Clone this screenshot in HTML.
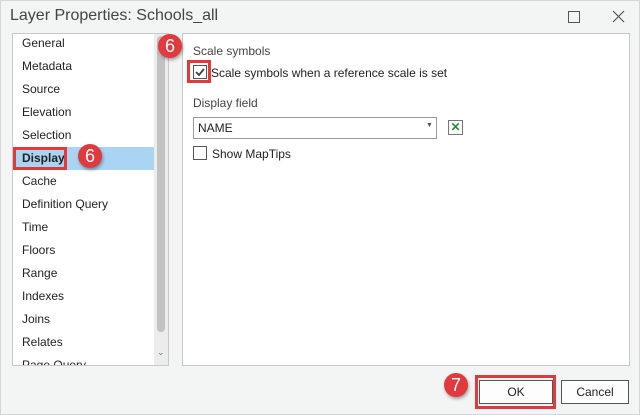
<!DOCTYPE html>
<html><head><style>
*{margin:0;padding:0;box-sizing:border-box}
body{width:640px;height:415px;background:#f3f4f4;font-family:"Liberation Sans",sans-serif;font-size:12px;color:#222;position:relative;overflow:hidden;border:1px solid #d4d6d6}
.a{position:absolute}
.title{left:9px;top:6px;font-size:16px;color:#444}
.list{left:11px;top:32px;width:157px;height:333px;background:#fff;border:1px solid #c8c8c8;overflow:hidden}
.item{position:absolute;left:9px;font-size:12px;color:#222}
.sb{left:141px;top:0;width:14px;height:331px;background:#ececec}
.thumb{left:3px;top:2px;width:8px;height:296px;background:#c2c2c2;border-radius:4px;position:absolute}
.panel{left:181px;top:32px;width:448px;height:333px;background:#fff;border:1px solid #c8c8c8}
.badge{width:24px;height:24px;border-radius:50%;background:#e0393e;color:#fff;font-size:18px;text-align:center;line-height:24px;box-shadow:1px 2px 3px rgba(0,0,0,.35)}
.red{border:3px solid #e0393e}
.btn{background:#fdfdfd;border:1px solid #555;text-align:center;line-height:22px;font-size:12px}
</style></head><body>
<div class="a title">Layer Properties: Schools_all</div>
<div class="a" style="left:567px;top:10px;width:12px;height:12px;border:1px solid #555"></div>
<svg class="a" style="left:611px;top:9px" width="13" height="13"><path d="M1 1L12 12M12 1L1 12" stroke="#555" stroke-width="1.2"/></svg>
<div class="a list">
<div class="a" style="left:0;top:113px;width:141px;height:23px;background:#a9d4f2"></div>
<div class="item" style="top:2px">General</div>
<div class="item" style="top:25px">Metadata</div>
<div class="item" style="top:48px">Source</div>
<div class="item" style="top:71px">Elevation</div>
<div class="item" style="top:94px">Selection</div>
<div class="item" style="top:117px;font-weight:bold">Display</div>
<div class="item" style="top:140px">Cache</div>
<div class="item" style="top:163px">Definition Query</div>
<div class="item" style="top:186px">Time</div>
<div class="item" style="top:209px">Floors</div>
<div class="item" style="top:232px">Range</div>
<div class="item" style="top:255px">Indexes</div>
<div class="item" style="top:278px">Joins</div>
<div class="item" style="top:301px">Relates</div>
<div class="item" style="top:324px">Page Query</div>
<div class="a sb"><div class="thumb"></div><div class="a" style="left:3px;top:313px;font-size:9px;color:#777">&#8964;</div></div>
</div>
<div class="a red" style="left:12px;top:146px;width:54px;height:23px"></div>
<div class="a badge" style="left:77px;top:143px">6</div>
<div class="a panel"></div>
<div class="a badge" style="left:157px;top:33px">6</div>
<div class="a" style="left:192px;top:43px;color:#444">Scale symbols</div>
<div class="a red" style="left:186px;top:59px;width:24px;height:23px"></div>
<div class="a" style="left:192px;top:64px;width:14px;height:14px;border:1px solid #555;background:#fff"></div>
<svg class="a" style="left:193px;top:65px" width="12" height="12"><path d="M2 6L5 9L10 3" stroke="#444" stroke-width="1.8" fill="none"/></svg>
<div class="a" style="left:210px;top:65px">Scale symbols when a reference scale is set</div>
<div class="a" style="left:192px;top:95px;color:#444">Display field</div>
<div class="a" style="left:192px;top:116px;width:244px;height:22px;border:1px solid #999;background:#fff;padding:3px 4px">NAME</div>
<div class="a" style="left:425px;top:121px;font-size:7px;color:#555">&#9660;</div>
<div class="a" style="left:447px;top:119px;width:15px;height:15px;border:1px solid #777;background:#fff;color:#2a8a3a;font-size:12px;line-height:13px;text-align:center;font-weight:bold">✕</div>
<div class="a" style="left:192px;top:145px;width:14px;height:14px;border:1px solid #555;background:#fff"></div>
<div class="a" style="left:211px;top:146px">Show MapTips</div>
<div class="a badge" style="left:443px;top:372px">7</div>
<div class="a red" style="left:474px;top:374px;width:81px;height:34px"></div>
<div class="a btn" style="left:478px;top:379px;width:74px;height:24px">OK</div>
<div class="a btn" style="left:560px;top:379px;width:68px;height:24px">Cancel</div>
</body></html>
